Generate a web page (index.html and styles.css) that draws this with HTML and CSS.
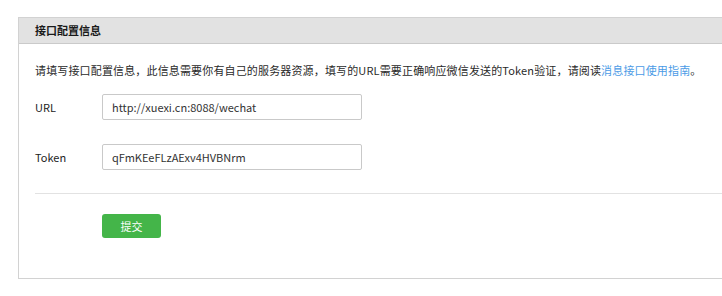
FILE: index.html
```html
<!DOCTYPE html>
<html lang="zh-CN">
<head>
<meta charset="utf-8">
<title>接口配置信息</title>
<link rel="stylesheet" href="styles.css">
</head>
<body>
<div class="panel">
  <div class="panel-head">接口配置信息</div>
  <div class="panel-body">
    <p class="desc">请填写接口配置信息，此信息需要你有自己的服务器资源，填写的URL需要正确响应微信发送的Token验证，请阅读<a class="link" href="#">消息接口使用指南</a>。</p>
    <div class="row">
      <label class="label">URL</label>
      <input class="input" type="text" value="http://xuexi.cn:8088/wechat">
    </div>
    <div class="row">
      <label class="label">Token</label>
      <input class="input" type="text" value="qFmKEeFLzAExv4HVBNrm">
    </div>
    <div class="sep"></div>
    <div class="actions">
      <button class="btn" type="button">提交</button>
    </div>
  </div>
</div>
</body>
</html>
```
FILE: styles.css
```css
html, body {
  margin: 0;
  padding: 0;
  background: #fff;
  overflow: hidden;
}
body {
  padding: 17px 0 0 18px;
  font-family: "Noto Sans CJK SC", "Noto Sans", sans-serif;
  font-size: 11px;
  color: #222;
}
.panel {
  width: 712px;
  border: 1px solid #d2d2d2;
  border-right: none;
  box-sizing: border-box;
}
.panel-head {
  height: 25px;
  line-height: 25px;
  background: #e2e2e2;
  border-bottom: 1px solid #cacaca;
  padding-left: 16px;
  font-weight: bold;
  color: #1a1a1a;
}
.panel-body {
  padding: 16px 0 40px 16px;
}
.desc {
  margin: 0;
  line-height: 20px;
  color: #2a2a2a;
  letter-spacing: 0.15px;
}
.link {
  color: #4b9be6;
  text-decoration: none;
}
.row {
  display: flex;
  align-items: center;
  margin-top: 24px;
}
.desc + .row {
  margin-top: 14px;
}
.label {
  width: 67px;
  color: #222;
}
.input {
  width: 260px;
  height: 26px;
  box-sizing: border-box;
  border: 1px solid #c9c9c9;
  border-radius: 2px;
  padding: 0 9px;
  font-family: "Noto Sans CJK SC", "Noto Sans", sans-serif;
  font-size: 11px;
  color: #333;
  outline: none;
}
.sep {
  margin-top: 23px;
  height: 1px;
  background: #e2e2e2;
}
.actions {
  padding: 20px 0 0 67px;
}
.btn {
  display: block;
  width: 59px;
  height: 24px;
  border: none;
  border-radius: 3px;
  background: #44b549;
  color: #fff;
  font-family: "Noto Sans CJK SC", "Noto Sans", sans-serif;
  font-size: 11px;
  padding: 0;
  cursor: pointer;
}
```
